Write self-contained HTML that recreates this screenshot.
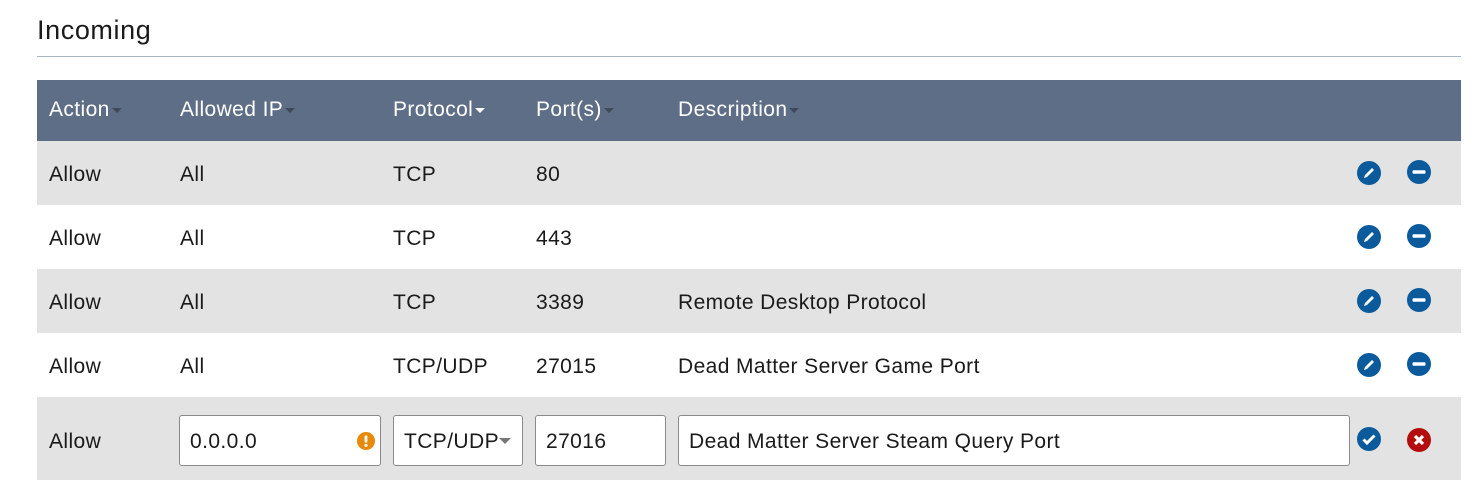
<!DOCTYPE html>
<html><head><style>
body{margin:0;width:1475px;height:480px;background:#fff;font-family:"Liberation Sans",sans-serif;color:#1a1a1a;position:relative;overflow:hidden}
.t{position:absolute;font-size:21px;letter-spacing:0.4px;white-space:nowrap}
h1{position:absolute;left:37px;top:15px;margin:0;font-weight:normal;font-size:27px;letter-spacing:0.6px;color:#1a1a1a}
.line{position:absolute;left:37px;top:56px;width:1424px;height:1px;background:#a9b6c5}
.hdr{position:absolute;left:37px;top:80px;width:1424px;height:61px;background:#5e6e87}
.row{position:absolute;left:37px;width:1424px;height:64px}
.g{background:#e3e3e3}
.h{color:#fff}
.caret{display:inline-block;width:0;height:0;border-left:5px solid transparent;border-right:5px solid transparent;border-top:5px solid #3e4a5c;vertical-align:middle;margin-left:2px}
.box{position:absolute;background:#fff;border:1px solid #8a8a8a;border-radius:3px;box-sizing:border-box;height:51px;top:415px;font-size:21px;letter-spacing:0.4px;line-height:51px;padding-left:10px}
svg.i{position:absolute;width:24px;height:24px}
</style></head><body>
<h1>Incoming</h1>
<div class="line"></div>
<div class="hdr"></div>
<div class="t h" style="left:49px;top:98px">Action<span class="caret"></span></div>
<div class="t h" style="left:180px;top:98px">Allowed IP<span class="caret"></span></div>
<div class="t h" style="left:393px;top:98px">Protocol<span class="caret" style="border-top-color:#fff"></span></div>
<div class="t h" style="left:536px;top:98px">Port(s)<span class="caret"></span></div>
<div class="t h" style="left:678px;top:98px">Description<span class="caret"></span></div>

<div class="row g" style="top:141px"></div>
<div class="row" style="top:205px"></div>
<div class="row g" style="top:269px"></div>
<div class="row" style="top:333px"></div>
<div class="row g" style="top:397px;height:83px"></div>

<div class="t" style="left:49px;top:163px">Allow</div><div class="t" style="left:180px;top:163px">All</div><div class="t" style="left:393px;top:163px">TCP</div><div class="t" style="left:536px;top:163px">80</div>
<div class="t" style="left:49px;top:227px">Allow</div><div class="t" style="left:180px;top:227px">All</div><div class="t" style="left:393px;top:227px">TCP</div><div class="t" style="left:536px;top:227px">443</div>
<div class="t" style="left:49px;top:291px">Allow</div><div class="t" style="left:180px;top:291px">All</div><div class="t" style="left:393px;top:291px">TCP</div><div class="t" style="left:536px;top:291px">3389</div><div class="t" style="left:678px;top:291px">Remote Desktop Protocol</div>
<div class="t" style="left:49px;top:355px">Allow</div><div class="t" style="left:180px;top:355px">All</div><div class="t" style="left:393px;top:355px">TCP/UDP</div><div class="t" style="left:536px;top:355px">27015</div><div class="t" style="left:678px;top:355px">Dead Matter Server Game Port</div>
<div class="t" style="left:49px;top:430px">Allow</div>

<div class="box" style="left:179px;width:202px">0.0.0.0
<svg style="position:absolute;right:5px;top:16px" width="18" height="18" viewBox="0 0 18 18"><circle cx="9" cy="9" r="9" fill="#e8890c"/><rect x="7.6" y="3.5" width="2.8" height="7" rx="1" fill="#fff"/><circle cx="9" cy="13.3" r="1.6" fill="#fff"/></svg></div>
<div class="box" style="left:393px;width:130px">TCP/UDP<span style="position:absolute;right:11px;top:22px;border-left:6px solid transparent;border-right:6px solid transparent;border-top:6px solid #777"></span></div>
<div class="box" style="left:535px;width:131px">27016</div>
<div class="box" style="left:678px;width:672px">Dead Matter Server Steam Query Port</div>

<svg class="i" style="left:1357px;top:161px" viewBox="0 0 24 24"><circle cx="12" cy="12" r="12" fill="#0a5a9c"/><path d="M7 17l1-3 7-7 2 2-7 7z" fill="#fff"/></svg>
<svg class="i" style="left:1407px;top:160px" viewBox="0 0 24 24"><circle cx="12" cy="12" r="12" fill="#0a5a9c"/><rect x="5.5" y="10.3" width="13" height="3.4" rx="1" fill="#fff"/></svg>
<svg class="i" style="left:1357px;top:225px" viewBox="0 0 24 24"><circle cx="12" cy="12" r="12" fill="#0a5a9c"/><path d="M7 17l1-3 7-7 2 2-7 7z" fill="#fff"/></svg>
<svg class="i" style="left:1407px;top:224px" viewBox="0 0 24 24"><circle cx="12" cy="12" r="12" fill="#0a5a9c"/><rect x="5.5" y="10.3" width="13" height="3.4" rx="1" fill="#fff"/></svg>
<svg class="i" style="left:1357px;top:289px" viewBox="0 0 24 24"><circle cx="12" cy="12" r="12" fill="#0a5a9c"/><path d="M7 17l1-3 7-7 2 2-7 7z" fill="#fff"/></svg>
<svg class="i" style="left:1407px;top:288px" viewBox="0 0 24 24"><circle cx="12" cy="12" r="12" fill="#0a5a9c"/><rect x="5.5" y="10.3" width="13" height="3.4" rx="1" fill="#fff"/></svg>
<svg class="i" style="left:1357px;top:353px" viewBox="0 0 24 24"><circle cx="12" cy="12" r="12" fill="#0a5a9c"/><path d="M7 17l1-3 7-7 2 2-7 7z" fill="#fff"/></svg>
<svg class="i" style="left:1407px;top:352px" viewBox="0 0 24 24"><circle cx="12" cy="12" r="12" fill="#0a5a9c"/><rect x="5.5" y="10.3" width="13" height="3.4" rx="1" fill="#fff"/></svg>
<svg class="i" style="left:1357px;top:427px" viewBox="0 0 24 24"><circle cx="12" cy="12" r="12" fill="#0a5a9c"/><path d="M6.5 12.5l3.5 3.5 7.5-7.5" stroke="#fff" stroke-width="3" fill="none"/></svg>
<svg class="i" style="left:1407px;top:428px" viewBox="0 0 24 24"><circle cx="12" cy="12" r="12" fill="#b30d0d"/><path d="M8 8l8 8M16 8l-8 8" stroke="#fff" stroke-width="3.2"/></svg>
</body></html>
